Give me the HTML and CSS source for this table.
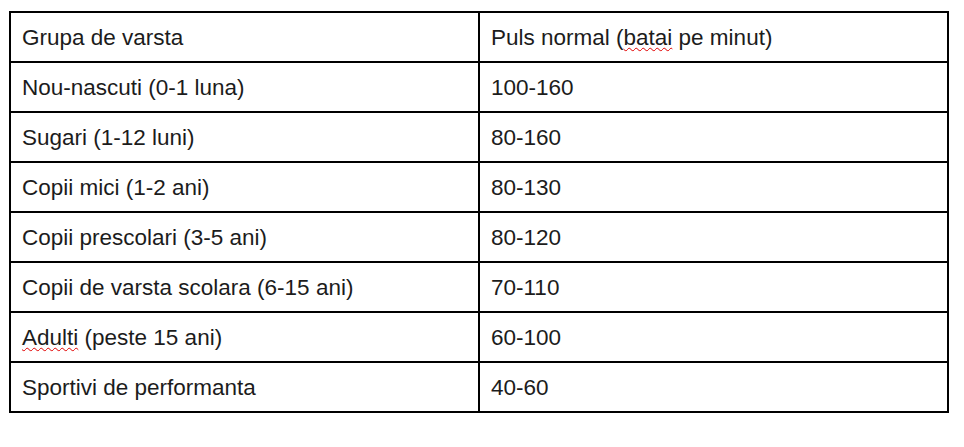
FILE: index.html
```html
<!DOCTYPE html>
<html>
<head>
<meta charset="utf-8">
<link rel="stylesheet" href="styles.css">
</head>
<body>
<table class="pulse-table">
  <tr><td>Grupa de varsta</td><td>Puls normal (<span class="spell">batai</span> pe minut)</td></tr>
  <tr><td>Nou-nascuti (0-1 luna)</td><td>100-160</td></tr>
  <tr><td>Sugari (1-12 luni)</td><td>80-160</td></tr>
  <tr><td>Copii mici (1-2 ani)</td><td>80-130</td></tr>
  <tr><td>Copii prescolari (3-5 ani)</td><td>80-120</td></tr>
  <tr><td>Copii de varsta scolara (6-15 ani)</td><td>70-110</td></tr>
  <tr><td><span class="spell">Adulti</span> (peste 15 ani)</td><td>60-100</td></tr>
  <tr><td>Sportivi de performanta</td><td>40-60</td></tr>
</table>
</body>
</html>
```
FILE: styles.css
```css
html, body {
  margin: 0;
  padding: 0;
  background: #ffffff;
}
.pulse-table {
  margin: 11px 0 0 9px;
  border-collapse: separate;
  border-spacing: 0;
  border-top: 2px solid #000;
  border-left: 2px solid #000;
  font-family: "Liberation Sans", Arial, sans-serif;
  font-size: 22.5px;
  color: #1c1c1c;
}
.pulse-table td {
  width: 469px;
  height: 50px;
  padding: 1px 11px 0 11px;
  box-sizing: border-box;
  border-right: 2px solid #000;
  border-bottom: 2px solid #000;
  vertical-align: middle;
  white-space: nowrap;
  line-height: 1.15;
}
.spell {
  text-decoration: underline wavy #e00000;
  text-decoration-thickness: 1px;
  text-underline-offset: 2px;
  text-decoration-skip-ink: none;
}
```
